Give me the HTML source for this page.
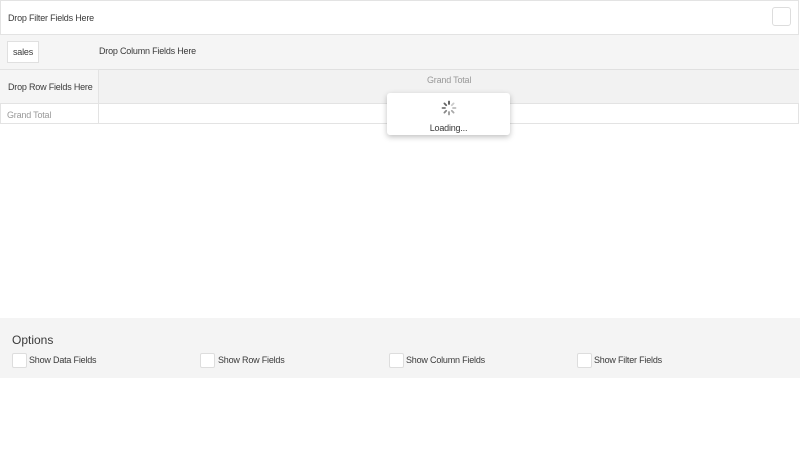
<!DOCTYPE html>
<html><head><style>
body{margin:0;width:800px;height:450px;background:#fff;font-family:"Liberation Sans",sans-serif;font-size:9px;letter-spacing:-0.2px;color:#3a3a3a;position:relative;overflow:hidden}
.a{position:absolute}
.cb{position:absolute;top:353px;width:13px;height:13px;background:#fff;border:1px solid #ddd;border-radius:2px}
.lb{position:absolute;top:355px;font-size:9px}
</style></head><body>
<div class="a" style="left:0;top:0;width:799px;height:124px;border-top:1px solid #e3e3e3;border-right:1px solid #e3e3e3;border-left:1px solid #e3e3e3;box-sizing:border-box"></div>
<div class="a" style="left:0;top:34px;width:799px;height:35px;background:#f5f5f5;border-top:1px solid #e3e3e3;box-sizing:border-box"></div>
<div class="a" style="left:0;top:69px;width:799px;height:34px;background:#f5f5f5;border-top:1px solid #e3e3e3;box-sizing:border-box"></div>
<div class="a" style="left:98px;top:69px;width:701px;height:34px;background:#f2f2f2;border-top:1px solid #e0e0e0;border-left:1px solid #e3e3e3;box-sizing:border-box"></div>
<div class="a" style="left:0;top:103px;width:799px;height:21px;border-top:1px solid #e3e3e3;border-bottom:1px solid #e3e3e3;box-sizing:border-box"></div>
<div class="a" style="left:98px;top:103px;width:1px;height:21px;background:#e3e3e3"></div>
<div class="a" style="left:8px;top:13px">Drop Filter Fields Here</div>
<div class="a" style="left:772px;top:7px;width:17px;height:17px;border:1px solid #ddd;border-radius:3px;background:#fff"></div>
<div class="a" style="left:7px;top:41px;width:32px;height:22px;background:#fff;border:1px solid #e0e0e0;box-sizing:border-box;text-align:center;line-height:20px">sales</div>
<div class="a" style="left:99px;top:46px">Drop Column Fields Here</div>
<div class="a" style="left:8px;top:82px">Drop Row Fields Here</div>
<div class="a" style="left:427px;top:75px;color:#999">Grand Total</div>
<div class="a" style="left:7px;top:110px;color:#999">Grand Total</div>
<div class="a" style="left:387px;top:93px;width:123px;height:42px;background:#fff;border-radius:3px;box-shadow:0 2px 6px rgba(0,0,0,.25)">
<svg class="a" style="left:54px;top:7px" width="16" height="16" viewBox="-8 -8 16 16">
<g stroke="#555" stroke-width="1.8" stroke-linecap="round">
<line x1="0" y1="-6.5" x2="0" y2="-4" opacity="1"/>
<line x1="4.6" y1="-4.6" x2="2.8" y2="-2.8" opacity=".3"/>
<line x1="6.5" y1="0" x2="4" y2="0" opacity=".4"/>
<line x1="4.6" y1="4.6" x2="2.8" y2="2.8" opacity=".5"/>
<line x1="0" y1="6.5" x2="0" y2="4" opacity=".6"/>
<line x1="-4.6" y1="4.6" x2="-2.8" y2="2.8" opacity=".7"/>
<line x1="-6.5" y1="0" x2="-4" y2="0" opacity=".8"/>
<line x1="-4.6" y1="-4.6" x2="-2.8" y2="-2.8" opacity=".9"/>
</g></svg>
<div class="a" style="left:0;width:123px;top:30px;text-align:center">Loading...</div>
</div>
<div class="a" style="left:0;top:318px;width:800px;height:60px;background:#f4f4f4"></div>
<div class="a" style="left:12px;top:333px;font-size:12px;letter-spacing:0">Options</div>
<div class="cb" style="left:12px"></div><div class="lb" style="left:29px">Show Data Fields</div>
<div class="cb" style="left:200px"></div><div class="lb" style="left:218px">Show Row Fields</div>
<div class="cb" style="left:389px"></div><div class="lb" style="left:406px">Show Column Fields</div>
<div class="cb" style="left:577px"></div><div class="lb" style="left:594px">Show Filter Fields</div>
</body></html>
